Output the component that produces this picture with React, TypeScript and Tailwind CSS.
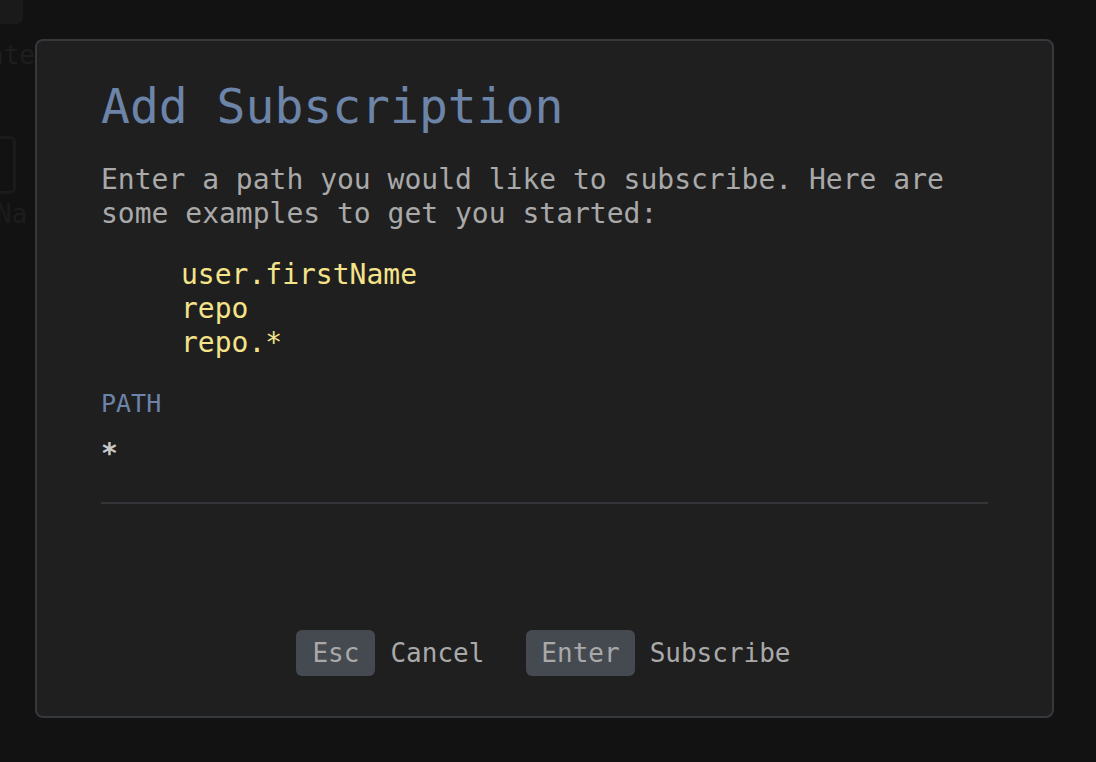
import React from "react";

const mono = { fontFamily: '"DejaVu Sans Mono", "Liberation Mono", monospace' };

export default function App() {
  return (
    <div className="relative h-[762px] w-[1096px] overflow-hidden bg-[#121212]" style={mono}>
      {/* faint background sidebar, dimmed by overlay */}
      <div className="flex flex-col items-start">
        <div className="ml-[-10px] mt-[-12px] h-[36px] w-[33px] rounded-[6px] bg-[#1a1a1a]" />
        <div className="ml-[-12px] mt-[16px] text-[26px] leading-[30px] text-[#1e1e1e]">ate</div>
        <div className="ml-[-14px] mt-[66px] h-[58px] w-[30px] rounded-[6px] border-[3px] border-[#1b1b1b]" />
        <div className="ml-[-4px] mt-[5px] text-[26px] leading-[30px] text-[#1c1c1c]">Na</div>
      </div>

      {/* modal */}
      <div className="absolute left-[35px] top-[39px] flex h-[679px] w-[1019px] flex-col rounded-[8px] border-2 border-[#35383c] bg-[#1f1f1f] px-[64px] pb-[40px] pt-[41px]">
        <h1 className="text-[48px] leading-[48px] text-[#6d84a9]">Add Subscription</h1>
        <p className="mt-[33px] text-[28px] leading-[34px] text-[#a9a9a9]">
          Enter a path you would like to subscribe. Here are
          <br />
          some examples to get you started:
        </p>
        <div className="mt-[27px] flex flex-col pl-[80px] text-[28px] leading-[34px] text-[#f5e38a]">
          <span>user.firstName</span>
          <span>repo</span>
          <span>repo.*</span>
        </div>
        <div className="mt-[29px] text-[25px] leading-[30px] text-[#6d84a9]">PATH</div>
        <div className="mt-[18px] border-b-2 border-[#333538] pb-[31px] text-[28px] font-bold leading-[34px] text-[#c8c8c8]">
          *
        </div>
        <div className="mt-auto flex items-center justify-center pr-[2px] text-[26px] leading-[30px] text-[#a9a9a9]">
          <span className="rounded-[6px] bg-[#454a50] px-[16px] py-[8px]">Esc</span>
          <span className="ml-[15px]">Cancel</span>
          <span className="ml-[42px] rounded-[6px] bg-[#454a50] px-[15px] py-[8px]">Enter</span>
          <span className="ml-[15px]">Subscribe</span>
        </div>
      </div>
    </div>
  );
}
